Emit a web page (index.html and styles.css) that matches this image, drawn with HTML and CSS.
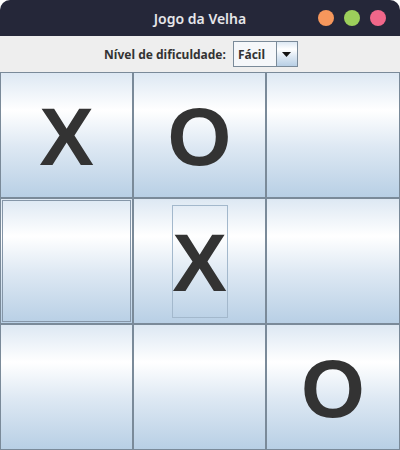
FILE: index.html
```html
<!DOCTYPE html>
<html lang="pt">
<head>
<meta charset="utf-8">
<title>Jogo da Velha</title>
<link rel="stylesheet" href="styles.css">
</head>
<body>
<div class="window">
  <div class="titlebar">
    <span class="title">Jogo da Velha</span>
    <div class="controls">
      <span class="dot orange"></span>
      <span class="dot green"></span>
      <span class="dot pink"></span>
    </div>
  </div>
  <div class="toolbar">
    <span class="label">Nível de dificuldade:</span>
    <div class="combo">
      <span class="combo-text">Fácil</span>
      <span class="combo-btn"><svg width="9" height="5" viewBox="0 0 9 5"><path d="M0 0H9L4.5 5Z" fill="#111"/></svg></span>
    </div>
  </div>
  <div class="board">
    <div class="cell"><span class="mark">X</span></div>
    <div class="cell"><span class="mark">O</span></div>
    <div class="cell wide"></div>
    <div class="cell selected"></div>
    <div class="cell"><span class="mark focus">X</span></div>
    <div class="cell wide"></div>
    <div class="cell"></div>
    <div class="cell"></div>
    <div class="cell wide"><span class="mark">O</span></div>
  </div>
</div>
</body>
</html>
```
FILE: styles.css
```css
html, body {
  margin: 0;
  padding: 0;
  background: #ffffff;
}
.window {
  width: 400px;
  height: 450px;
  border-radius: 10px 10px 0 0;
  overflow: hidden;
  background: #eeeeee;
  display: flex;
  flex-direction: column;
}
.titlebar {
  height: 36px;
  flex: none;
  background: #252739;
  position: relative;
  display: flex;
  align-items: center;
  justify-content: center;
}
.title {
  color: #e6e6e9;
  font-family: "Noto Sans", "DejaVu Sans", sans-serif;
  font-weight: 600;
  font-size: 14px;
}
.controls {
  position: absolute;
  right: 14px;
  top: 10px;
  display: flex;
  gap: 10px;
}
.dot {
  width: 16px;
  height: 16px;
  border-radius: 50%;
}
.orange { background: #f6975c; }
.green { background: #9ccf5b; }
.pink { background: #f1678a; }
.toolbar {
  height: 36px;
  flex: none;
  display: flex;
  align-items: center;
  justify-content: center;
  gap: 7px;
  padding-left: 2px;
  box-sizing: border-box;
}
.label {
  font-family: "Noto Sans", "DejaVu Sans", sans-serif;
  font-weight: 700;
  font-size: 12px;
  color: #333333;
}
.combo {
  width: 65px;
  height: 26px;
  box-sizing: border-box;
  border: 1px solid #7a8a99;
  display: flex;
  margin-top: 0px;
}
.combo-text {
  flex: 1;
  background: #f5f7fa;
  font-family: "Noto Sans", "DejaVu Sans", sans-serif;
  font-weight: 700;
  font-size: 12px;
  color: #333333;
  display: flex;
  align-items: center;
  padding-left: 4px;
}
.combo-btn {
  width: 20px;
  border-left: 1px solid #7a8a99;
  background: linear-gradient(#dde8f3 0%, #ffffff 30%, #dde8f3 60%, #b8cfe5 100%);
  display: flex;
  align-items: center;
  justify-content: center;
}
.board {
  flex: 1;
  display: grid;
  grid-template-columns: 133px 133px 134px;
  grid-template-rows: 126px 126px 126px;
}
.cell {
  box-sizing: border-box;
  border: 1px solid #7a8a99;
  background: linear-gradient(#dde8f3 0%, #ffffff 30%, #dde8f3 60%, #b8cfe5 100%);
  display: flex;
  align-items: center;
  justify-content: center;
}
.cell.selected {
  outline: 1px solid #8596a8;
  outline-offset: -3px;
}
.mark {
  font-family: "Liberation Sans", Arial, sans-serif;
  font-weight: 700;
  font-size: 82px;
  line-height: 1;
  color: #333333;
  padding-top: 4px;
}
.mark.focus {
  box-sizing: border-box;
  width: 56px;
  height: 113px;
  border: 1px solid #a3b8cc;
  display: flex;
  align-items: center;
  justify-content: center;
  padding-top: 3px;
}
```
